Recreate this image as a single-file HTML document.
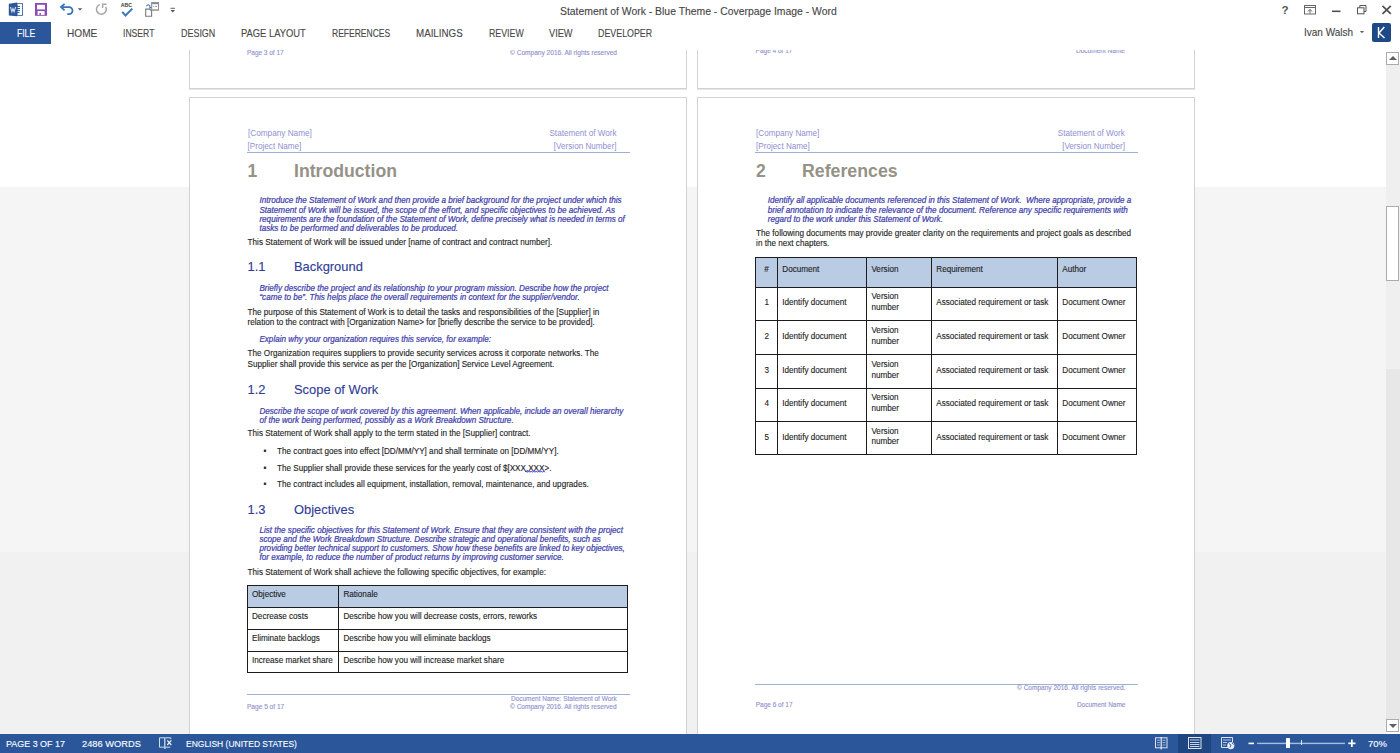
<!DOCTYPE html>
<html><head><meta charset="utf-8">
<style>
*{margin:0;padding:0;box-sizing:border-box}
html,body{width:1400px;height:753px;overflow:hidden;background:#fff;position:relative;font-family:"Liberation Sans",sans-serif}
.t{position:absolute;white-space:pre;line-height:0;transform-origin:0 50%;font-family:"Liberation Sans",sans-serif;-webkit-text-stroke:0.12px currentColor}
.a{position:absolute}
.pg{position:absolute;background:#fff;border:1px solid #d2d2d2}
.hl{position:absolute;height:1px;background:#9db2d2}
.tb{position:absolute;border:1px solid #1c1c1c}
.vl{position:absolute;width:1px;background:#1c1c1c}
.hr{position:absolute;height:1px;background:#1c1c1c}
</style></head><body>
<!-- background bands -->
<div class="a" style="left:0;top:187px;width:1386px;height:365px;background:#f5f5f5"></div>
<div class="a" style="left:0;top:552px;width:1386px;height:182px;background:#f1f1f1"></div>
<!-- scrollbar -->
<div class="a" style="left:1386px;top:64px;width:14px;height:305px;background:#efefef"></div>
<div class="a" style="left:1386px;top:369px;width:14px;height:351px;background:#e7e7e7"></div>
<div class="a" style="left:1386px;top:52px;width:13px;height:13px;background:#fff;border:1px solid #ababab"></div>
<div class="a" style="left:1389px;top:56px;width:0;height:0;border-left:4px solid transparent;border-right:4px solid transparent;border-bottom:4px solid #606060"></div>
<div class="a" style="left:1386px;top:206px;width:13px;height:75px;background:#fff;border:1px solid #ababab"></div>
<div class="a" style="left:1386px;top:719px;width:13px;height:13px;background:#fff;border:1px solid #ababab"></div>
<div class="a" style="left:1389px;top:724px;width:0;height:0;border-left:4px solid transparent;border-right:4px solid transparent;border-top:4px solid #606060"></div>

<!-- top partial pages -->
<div class="pg" style="left:189px;top:40px;width:498px;height:49px;border-top:none;box-shadow:0 1px 0 #e6e6e6"></div>
<div class="pg" style="left:697px;top:40px;width:498px;height:49px;border-top:none;box-shadow:0 1px 0 #e6e6e6"></div>
<!-- main pages -->
<div class="pg" style="left:189px;top:97px;width:498px;height:700px"></div>
<div class="pg" style="left:697px;top:97px;width:498px;height:700px"></div>

<!-- header/footer lines -->
<div class="hl" style="left:247px;top:152px;width:383px"></div>
<div class="hl" style="left:755px;top:152px;width:383px"></div>
<div class="hl" style="left:247px;top:694px;width:383px"></div>
<div class="hl" style="left:755px;top:684px;width:383px"></div>

<!-- table 1 -->
<div class="a" style="left:247px;top:585px;width:381px;height:23px;background:#b9cce4"></div>
<div class="tb" style="left:247px;top:585px;width:381px;height:88px"></div>
<div class="hr" style="left:247px;top:607px;width:381px"></div>
<div class="hr" style="left:247px;top:629px;width:381px"></div>
<div class="hr" style="left:247px;top:651px;width:381px"></div>
<div class="vl" style="left:338px;top:585px;height:88px"></div>

<!-- table 2 -->
<div class="a" style="left:755px;top:257px;width:382px;height:31px;background:#b9cce4"></div>
<div class="tb" style="left:755px;top:257px;width:382px;height:198px"></div>
<div class="hr" style="left:755px;top:287px;width:382px"></div>
<div class="hr" style="left:755px;top:320px;width:382px"></div>
<div class="hr" style="left:755px;top:354px;width:382px"></div>
<div class="hr" style="left:755px;top:388px;width:382px"></div>
<div class="hr" style="left:755px;top:421px;width:382px"></div>
<div class="vl" style="left:777px;top:257px;height:198px"></div>
<div class="vl" style="left:866px;top:257px;height:198px"></div>
<div class="vl" style="left:931px;top:257px;height:198px"></div>
<div class="vl" style="left:1057px;top:257px;height:198px"></div>

<!-- ribbon: title bar + tabs -->
<div class="a" style="left:0;top:0;width:1400px;height:50px;background:#fff;z-index:5"></div>
<div class="a" style="left:0;top:22px;width:51px;height:22px;background:#2b579a;z-index:5"></div>
<div class="a" style="left:1372px;top:23px;width:19px;height:19px;background:#1d4a86;border-radius:2px;z-index:5"></div>

<!-- status bar -->
<div class="a" style="left:0;top:734px;width:1400px;height:19px;background:#2b579a"></div>
<div class="a" style="left:1178px;top:734px;width:33px;height:19px;background:#1f4680"></div>

<svg class="a" style="left:0;top:0;z-index:7" width="1400" height="753" viewBox="0 0 1400 753">
<!-- Word logo -->
<rect x="17.2" y="3.6" width="5.3" height="11.8" fill="#fff" stroke="#3d68a8" stroke-width="0.9"/>
<path d="M17 6.4 H20 M17 8.5 H20 M17 10.4 H20 M17 12.4 H19.5" stroke="#2b579a" stroke-width="1"/>
<path d="M8.8 3.7 L17 2.5 L17 16.3 L8.8 15.4 Z" fill="#2b579a"/>
<path d="M10.5 7 L11.9 11.8 L13 8.6 L14.1 11.8 L15.6 7" fill="none" stroke="#d5def0" stroke-width="1.1"/>
<!-- Save -->
<rect x="35" y="3" width="12" height="12.8" fill="#8a4db3"/>
<rect x="37" y="4.8" width="8" height="4.6" fill="#fff"/>
<rect x="37.6" y="11" width="7" height="3.9" fill="#fff"/>
<rect x="39.4" y="12.9" width="1.5" height="2" fill="#8a4db3"/>
<!-- Undo -->
<path d="M61.5 7.1 H69 A3.5 3.5 0 0 1 69 14.1 H67.3" fill="none" stroke="#3372bf" stroke-width="1.8"/>
<path d="M64.6 3.8 L61 7.1 L64.6 10.4" fill="none" stroke="#3372bf" stroke-width="1.8"/>
<path d="M77.8 8.2 H82.3 L80 10.5 Z" fill="#555"/>
<!-- Redo (gray circle arrow) -->
<path d="M99.8 4.6 A4.9 4.9 0 1 0 105.6 6.8" fill="none" stroke="#a6a6a6" stroke-width="1.5"/>
<path d="M102.6 8.1 V4.3 H106.6" fill="none" stroke="#a6a6a6" stroke-width="1.5"/>
<!-- ABC check -->
<text x="120.8" y="7" font-family="Liberation Sans" font-size="5" font-weight="700" fill="#3a3a3a" textLength="11.2" lengthAdjust="spacingAndGlyphs">ABC</text>
<path d="M122.2 11.8 L125.5 15.5 L132.3 8.6" fill="none" stroke="#3d76bd" stroke-width="2"/>
<!-- doc/screen icon -->
<rect x="151.7" y="2.8" width="6.8" height="7.2" fill="#fff" stroke="#8a8a8a" stroke-width="1"/>
<rect x="151.2" y="2.3" width="7.8" height="1.9" fill="#8a8a8a"/>
<path d="M153.3 6.4 H154.2 M155.1 6.4 H157.1" stroke="#8a8a8a" stroke-width="0.9"/>
<rect x="151.6" y="9.6" width="7.3" height="1.1" fill="#9c9c9c"/>
<path d="M145.7 9.1 H149.7 L151.6 11 V16.2 H145.7 Z" fill="#fff" stroke="#7a7a7a" stroke-width="1.1"/>
<path d="M146.4 6.3 Q148.3 3.2 150.2 6.3" fill="none" stroke="#3a78c3" stroke-width="1.2"/>
<path d="M148.9 6.2 L151.9 7.2 L149.8 8.9 Z" fill="#3a78c3"/>
<!-- customize -->
<path d="M170.5 8.3 H175" stroke="#555" stroke-width="0.9"/>
<path d="M170.5 10 H175 L172.75 12.6 Z" fill="#555"/>

<!-- title right icons -->
<text x="1281.5" y="14" font-family="Liberation Sans" font-size="11.5" font-weight="700" fill="#555">?</text>
<rect x="1304.5" y="5.5" width="11" height="8.5" fill="none" stroke="#666" stroke-width="1"/>
<path d="M1304.5 7.5 H1315.5" stroke="#666" stroke-width="1"/>
<path d="M1310 13.5 V9.5 M1308 11.5 L1310 9.3 L1312 11.5" fill="none" stroke="#666" stroke-width="1"/>
<path d="M1332 11.3 H1340.5" stroke="#505050" stroke-width="1.6"/>
<rect x="1357.5" y="7.8" width="6.5" height="6" fill="none" stroke="#555" stroke-width="1"/>
<path d="M1359.8 7.8 V5.5 H1366 V11.5 H1364" fill="none" stroke="#555" stroke-width="1"/>
<path d="M1382.5 5.8 L1390.8 13.8 M1390.8 5.8 L1382.5 13.8" stroke="#505050" stroke-width="1.7"/>
<!-- account -->
<path d="M1359.8 31 H1364.2 L1362 33.3 Z" fill="#666"/>
<path d="M1378.5 27 V38 M1384.3 27 L1379 33 L1384.5 38" fill="none" stroke="#fff" stroke-width="1.4"/>

<!-- status bar icons -->
<!-- proofing -->
<path d="M159.5 737.8 H164.6 V747.2 H159.5 Z" fill="none" stroke="#d3dcec" stroke-width="1"/>
<path d="M165.2 737.8 H170.8 V739.2 M165.2 747.2 H170.2" fill="none" stroke="#d3dcec" stroke-width="1"/>
<path d="M164.9 737.3 V748" stroke="#b9c7df" stroke-width="1"/>
<rect x="164.2" y="747.6" width="1.5" height="1.2" fill="#e8eef7"/>
<path d="M167.3 740.4 L171.3 745 M171.3 740.4 L167.3 745" stroke="#f2f5fa" stroke-width="1.2"/>
<!-- read mode -->
<rect x="1155.5" y="737.8" width="11.5" height="10" fill="none" stroke="#dbe3f0" stroke-width="1"/>
<path d="M1161.2 737 V749.5" stroke="#e6ecf5" stroke-width="1.2"/>
<path d="M1157 740.3 H1160 M1157 742.6 H1160 M1157 745 H1160 M1162.5 740.3 H1165.5 M1162.5 742.6 H1165.5 M1162.5 745 H1165.5" stroke="#aebfdb" stroke-width="0.9"/>
<!-- print layout -->
<rect x="1188.5" y="737.5" width="12.5" height="11" fill="none" stroke="#dbe3f0" stroke-width="1"/>
<path d="M1190 740 H1199.5 M1190 742.5 H1199.5 M1190 744.5 H1199.5 M1190 746.5 H1199.5" stroke="#dbe3f0" stroke-width="0.9"/>
<!-- web layout -->
<path d="M1228 747.5 H1221.5 V737.5 H1232.5 V742" fill="none" stroke="#dbe3f0" stroke-width="1"/>
<path d="M1223 740 H1231 M1223 742.5 H1227 M1223 745 H1226" stroke="#c5d2e6" stroke-width="0.9"/>
<circle cx="1230.8" cy="745.6" r="3.6" fill="#e6ecf5"/>
<path d="M1229 743.5 L1231 745 L1230 747.5 M1232 743 L1233.5 744.5" fill="none" stroke="#2b579a" stroke-width="0.9"/>
<!-- zoom slider -->
<rect x="1248.5" y="742.6" width="5.5" height="1.6" fill="#fff"/>
<rect x="1257" y="742.7" width="88" height="1.4" fill="#a9bcd9"/>
<rect x="1286" y="738" width="4" height="10" fill="#fff"/>
<rect x="1301" y="740" width="1" height="5" fill="#dbe3f0"/>
<rect x="1348.3" y="742.5" width="7.2" height="1.7" fill="#fff"/>
<rect x="1351" y="739.5" width="1.7" height="7.5" fill="#fff"/>
<path d="M525 471.8 L526.25 471.0 L527.50 472.3 L528.75 471.0 L530.00 472.3 L531.25 471.0 L532.50 472.3 L533.75 471.0 L535.00 472.3 L536.25 471.0 L537.50 472.3 L538.75 471.0 L540.00 472.3 L541.25 471.0 L542.50 472.3 L543.75 471.0 L545.00 472.3" fill="none" stroke="#2626f5" stroke-width="0.9"/>
</svg>

<span class="t" style="left:560.30px;top:11.28px;font-size:11.3px;color:#444;transform:scaleX(0.9201);z-index:6;">Statement of Work - Blue Theme - Coverpage Image - Word</span>
<span class="t" style="left:16.90px;top:32.78px;font-size:11.3px;color:#fff;transform:scaleX(0.7585);z-index:6;">FILE</span>
<span class="t" style="left:66.70px;top:32.78px;font-size:11.3px;color:#474747;transform:scaleX(0.8938);z-index:6;">HOME</span>
<span class="t" style="left:122.60px;top:32.78px;font-size:11.3px;color:#474747;transform:scaleX(0.7615);z-index:6;">INSERT</span>
<span class="t" style="left:180.70px;top:32.78px;font-size:11.3px;color:#474747;transform:scaleX(0.7917);z-index:6;">DESIGN</span>
<span class="t" style="left:240.70px;top:32.78px;font-size:11.3px;color:#474747;transform:scaleX(0.8287);z-index:6;">PAGE LAYOUT</span>
<span class="t" style="left:331.80px;top:32.78px;font-size:11.3px;color:#474747;transform:scaleX(0.7536);z-index:6;">REFERENCES</span>
<span class="t" style="left:415.80px;top:32.78px;font-size:11.3px;color:#474747;transform:scaleX(0.8648);z-index:6;">MAILINGS</span>
<span class="t" style="left:488.50px;top:32.78px;font-size:11.3px;color:#474747;transform:scaleX(0.7784);z-index:6;">REVIEW</span>
<span class="t" style="left:549.00px;top:32.78px;font-size:11.3px;color:#474747;transform:scaleX(0.8137);z-index:6;">VIEW</span>
<span class="t" style="left:597.60px;top:32.78px;font-size:11.3px;color:#474747;transform:scaleX(0.7846);z-index:6;">DEVELOPER</span>
<span class="t" style="left:1304.00px;top:32.08px;font-size:11.3px;color:#444;transform:scaleX(0.8833);z-index:6;">Ivan Walsh</span>
<span class="t" style="left:6.00px;top:743.67px;font-size:9.6px;color:#fff;transform:scaleX(0.9318);">PAGE 3 OF 17</span>
<span class="t" style="left:82.00px;top:743.67px;font-size:9.6px;color:#fff;transform:scaleX(0.9701);">2486 WORDS</span>
<span class="t" style="left:186.00px;top:743.67px;font-size:9.6px;color:#fff;transform:scaleX(0.8843);">ENGLISH (UNITED STATES)</span>
<span class="t" style="left:1368.00px;top:743.67px;font-size:9.6px;color:#fff;transform:scaleX(0.9888);">70%</span>
<span class="t" style="left:247.40px;top:53.05px;font-size:6.5px;color:#8f8fcc;transform:scaleX(0.9928);-webkit-text-stroke:0.12px currentColor;">Page 3 of 17</span>
<span class="t" style="left:510.00px;top:53.05px;font-size:6.5px;color:#8f8fcc;transform:scaleX(1.0099);-webkit-text-stroke:0.12px currentColor;">© Company 2016. All rights reserved</span>
<span class="t" style="left:755.60px;top:51.45px;font-size:6.5px;color:#8f8fcc;-webkit-text-stroke:0.12px currentColor;">Page 4 of 17</span>
<span class="t" style="left:1076.00px;top:51.45px;font-size:6.5px;color:#8f8fcc;transform:scaleX(1.0047);-webkit-text-stroke:0.12px currentColor;">Document Name</span>
<span class="t" style="left:247.60px;top:134.48px;font-size:8.15px;color:#8f8fcf;transform:scaleX(1.0093);-webkit-text-stroke:0;">[Company Name]</span>
<span class="t" style="left:247.60px;top:146.58px;font-size:8.15px;color:#8f8fcf;-webkit-text-stroke:0;">[Project Name]</span>
<span class="t" style="left:549.46px;top:134.48px;font-size:8.15px;color:#8f8fcf;-webkit-text-stroke:0;">Statement of Work</span>
<span class="t" style="left:553.84px;top:146.58px;font-size:8.15px;color:#8f8fcf;-webkit-text-stroke:0;">[Version Number]</span>
<span class="t" style="left:247.60px;top:171.20px;font-size:17.6px;color:#959286;font-weight:700;-webkit-text-stroke:0;">1</span>
<span class="t" style="left:294.00px;top:171.20px;font-size:17.6px;color:#959286;font-weight:700;transform:scaleX(1.0035);-webkit-text-stroke:0;">Introduction</span>
<span class="t" style="left:259.40px;top:201.28px;font-size:8.15px;color:#4040aa;font-style:italic;-webkit-text-stroke:0.22px currentColor;">Introduce the Statement of Work and then provide a brief background for the project under which this</span>
<span class="t" style="left:259.40px;top:210.68px;font-size:8.15px;color:#4040aa;font-style:italic;-webkit-text-stroke:0.22px currentColor;">Statement of Work will be issued, the scope of the effort, and specific objectives to be achieved. As</span>
<span class="t" style="left:259.40px;top:219.98px;font-size:8.15px;color:#4040aa;font-style:italic;-webkit-text-stroke:0.22px currentColor;">requirements are the foundation of the Statement of Work, define precisely what is needed in terms of</span>
<span class="t" style="left:259.40px;top:229.28px;font-size:8.15px;color:#4040aa;font-style:italic;-webkit-text-stroke:0.22px currentColor;">tasks to be performed and deliverables to be produced.</span>
<span class="t" style="left:247.60px;top:242.78px;font-size:8.15px;color:#1e1e1e;">This Statement of Work will be issued under [name of contract and contract number].</span>
<span class="t" style="left:247.60px;top:267.03px;font-size:12.9px;color:#2f3b96;">1.1</span>
<span class="t" style="left:294.00px;top:267.03px;font-size:12.9px;color:#2f3b96;">Background</span>
<span class="t" style="left:259.40px;top:288.98px;font-size:8.15px;color:#4040aa;font-style:italic;-webkit-text-stroke:0.22px currentColor;">Briefly describe the project and its relationship to your program mission. Describe how the project</span>
<span class="t" style="left:259.40px;top:298.38px;font-size:8.15px;color:#4040aa;font-style:italic;-webkit-text-stroke:0.22px currentColor;">“came to be”. This helps place the overall requirements in context for the supplier/vendor.</span>
<span class="t" style="left:247.60px;top:312.78px;font-size:8.15px;color:#1e1e1e;">The purpose of this Statement of Work is to detail the tasks and responsibilities of the [Supplier] in</span>
<span class="t" style="left:247.60px;top:322.78px;font-size:8.15px;color:#1e1e1e;">relation to the contract with [Organization Name&gt; for [briefly describe the service to be provided].</span>
<span class="t" style="left:259.40px;top:340.38px;font-size:8.15px;color:#4040aa;font-style:italic;-webkit-text-stroke:0.22px currentColor;">Explain why your organization requires this service, for example:</span>
<span class="t" style="left:247.60px;top:354.18px;font-size:8.15px;color:#1e1e1e;">The Organization requires suppliers to provide security services across it corporate networks. The</span>
<span class="t" style="left:247.60px;top:365.08px;font-size:8.15px;color:#1e1e1e;">Supplier shall provide this service as per the [Organization] Service Level Agreement.</span>
<span class="t" style="left:247.60px;top:390.03px;font-size:12.9px;color:#2f3b96;">1.2</span>
<span class="t" style="left:294.00px;top:390.03px;font-size:12.9px;color:#2f3b96;">Scope of Work</span>
<span class="t" style="left:259.40px;top:411.98px;font-size:8.15px;color:#4040aa;font-style:italic;-webkit-text-stroke:0.22px currentColor;">Describe the scope of work covered by this agreement. When applicable, include an overall hierarchy</span>
<span class="t" style="left:259.40px;top:421.08px;font-size:8.15px;color:#4040aa;font-style:italic;-webkit-text-stroke:0.22px currentColor;">of the work being performed, possibly as a Work Breakdown Structure.</span>
<span class="t" style="left:247.60px;top:434.38px;font-size:8.15px;color:#1e1e1e;">This Statement of Work shall apply to the term stated in the [Supplier] contract.</span>
<span class="t" style="left:263.50px;top:451.78px;font-size:8.15px;color:#1e1e1e;">•</span>
<span class="t" style="left:277.10px;top:451.78px;font-size:8.15px;color:#1e1e1e;">The contract goes into effect [DD/MM/YY] and shall terminate on [DD/MM/YY].</span>
<span class="t" style="left:263.50px;top:468.98px;font-size:8.15px;color:#1e1e1e;">•</span>
<span class="t" style="left:277.10px;top:468.98px;font-size:8.15px;color:#1e1e1e;">The Supplier shall provide these services for the yearly cost of $[XXX,XXX&gt;.</span>
<span class="t" style="left:263.50px;top:484.98px;font-size:8.15px;color:#1e1e1e;">•</span>
<span class="t" style="left:277.10px;top:484.98px;font-size:8.15px;color:#1e1e1e;">The contract includes all equipment, installation, removal, maintenance, and upgrades.</span>
<span class="t" style="left:247.60px;top:510.03px;font-size:12.9px;color:#2f3b96;">1.3</span>
<span class="t" style="left:294.00px;top:510.03px;font-size:12.9px;color:#2f3b96;">Objectives</span>
<span class="t" style="left:259.40px;top:531.38px;font-size:8.15px;color:#4040aa;font-style:italic;-webkit-text-stroke:0.22px currentColor;">List the specific objectives for this Statement of Work. Ensure that they are consistent with the project</span>
<span class="t" style="left:259.40px;top:540.48px;font-size:8.15px;color:#4040aa;font-style:italic;-webkit-text-stroke:0.22px currentColor;">scope and the Work Breakdown Structure. Describe strategic and operational benefits, such as</span>
<span class="t" style="left:259.40px;top:549.38px;font-size:8.15px;color:#4040aa;font-style:italic;-webkit-text-stroke:0.22px currentColor;">providing better technical support to customers. Show how these benefits are linked to key objectives,</span>
<span class="t" style="left:259.40px;top:558.48px;font-size:8.15px;color:#4040aa;font-style:italic;-webkit-text-stroke:0.22px currentColor;">for example, to reduce the number of product returns by improving customer service.</span>
<span class="t" style="left:247.60px;top:572.88px;font-size:8.15px;color:#1e1e1e;">This Statement of Work shall achieve the following specific objectives, for example:</span>
<span class="t" style="left:252.00px;top:595.08px;font-size:8.15px;color:#1e1e1e;">Objective</span>
<span class="t" style="left:343.40px;top:595.08px;font-size:8.15px;color:#1e1e1e;">Rationale</span>
<span class="t" style="left:252.00px;top:617.08px;font-size:8.15px;color:#1e1e1e;">Decrease costs</span>
<span class="t" style="left:343.40px;top:617.08px;font-size:8.15px;color:#1e1e1e;">Describe how you will decrease costs, errors, reworks</span>
<span class="t" style="left:252.00px;top:639.08px;font-size:8.15px;color:#1e1e1e;">Eliminate backlogs</span>
<span class="t" style="left:343.40px;top:639.08px;font-size:8.15px;color:#1e1e1e;">Describe how you will eliminate backlogs</span>
<span class="t" style="left:252.00px;top:660.78px;font-size:8.15px;color:#1e1e1e;">Increase market share</span>
<span class="t" style="left:343.40px;top:660.78px;font-size:8.15px;color:#1e1e1e;">Describe how you will increase market share</span>
<span class="t" style="left:510.90px;top:698.55px;font-size:6.5px;color:#8f8fcc;transform:scaleX(0.9963);-webkit-text-stroke:0.12px currentColor;">Document Name: Statement of Work</span>
<span class="t" style="left:510.00px;top:707.05px;font-size:6.5px;color:#8f8fcc;transform:scaleX(1.0061);-webkit-text-stroke:0.12px currentColor;">© Company 2016. All rights reserved</span>
<span class="t" style="left:247.40px;top:707.05px;font-size:6.5px;color:#8f8fcc;transform:scaleX(1.0091);-webkit-text-stroke:0.12px currentColor;">Page 5 of 17</span>
<span class="t" style="left:756.10px;top:134.48px;font-size:8.15px;color:#8f8fcf;-webkit-text-stroke:0;">[Company Name]</span>
<span class="t" style="left:756.10px;top:146.58px;font-size:8.15px;color:#8f8fcf;-webkit-text-stroke:0;">[Project Name]</span>
<span class="t" style="left:1057.76px;top:134.48px;font-size:8.15px;color:#8f8fcf;-webkit-text-stroke:0;">Statement of Work</span>
<span class="t" style="left:1062.14px;top:146.58px;font-size:8.15px;color:#8f8fcf;-webkit-text-stroke:0;">[Version Number]</span>
<span class="t" style="left:756.00px;top:171.20px;font-size:17.6px;color:#959286;font-weight:700;-webkit-text-stroke:0;">2</span>
<span class="t" style="left:802.30px;top:171.20px;font-size:17.6px;color:#959286;font-weight:700;transform:scaleX(1.0084);-webkit-text-stroke:0;">References</span>
<span class="t" style="left:767.70px;top:201.28px;font-size:8.15px;color:#4040aa;font-style:italic;-webkit-text-stroke:0.22px currentColor;">Identify all applicable documents referenced in this Statement of Work.  Where appropriate, provide a</span>
<span class="t" style="left:767.70px;top:210.68px;font-size:8.15px;color:#4040aa;font-style:italic;-webkit-text-stroke:0.22px currentColor;">brief annotation to indicate the relevance of the document. Reference any specific requirements with</span>
<span class="t" style="left:767.70px;top:219.98px;font-size:8.15px;color:#4040aa;font-style:italic;-webkit-text-stroke:0.22px currentColor;">regard to the work under this Statement of Work.</span>
<span class="t" style="left:756.10px;top:233.58px;font-size:8.15px;color:#1e1e1e;">The following documents may provide greater clarity on the requirements and project goals as described</span>
<span class="t" style="left:756.10px;top:244.18px;font-size:8.15px;color:#1e1e1e;">in the next chapters.</span>
<span class="t" style="left:764.20px;top:270.48px;font-size:8.15px;color:#1e1e1e;">#</span>
<span class="t" style="left:782.30px;top:270.48px;font-size:8.15px;color:#1e1e1e;">Document</span>
<span class="t" style="left:871.40px;top:270.48px;font-size:8.15px;color:#1e1e1e;">Version</span>
<span class="t" style="left:936.30px;top:270.48px;font-size:8.15px;color:#1e1e1e;">Requirement</span>
<span class="t" style="left:1062.30px;top:270.48px;font-size:8.15px;color:#1e1e1e;">Author</span>
<span class="t" style="left:764.50px;top:303.28px;font-size:8.15px;color:#1e1e1e;">1</span>
<span class="t" style="left:782.30px;top:303.28px;font-size:8.15px;color:#1e1e1e;">Identify document</span>
<span class="t" style="left:871.40px;top:297.08px;font-size:8.15px;color:#1e1e1e;">Version</span>
<span class="t" style="left:871.40px;top:307.88px;font-size:8.15px;color:#1e1e1e;">number</span>
<span class="t" style="left:936.30px;top:303.28px;font-size:8.15px;color:#1e1e1e;">Associated requirement or task</span>
<span class="t" style="left:1062.30px;top:303.28px;font-size:8.15px;color:#1e1e1e;">Document Owner</span>
<span class="t" style="left:764.50px;top:337.03px;font-size:8.15px;color:#1e1e1e;">2</span>
<span class="t" style="left:782.30px;top:337.03px;font-size:8.15px;color:#1e1e1e;">Identify document</span>
<span class="t" style="left:871.40px;top:330.83px;font-size:8.15px;color:#1e1e1e;">Version</span>
<span class="t" style="left:871.40px;top:341.63px;font-size:8.15px;color:#1e1e1e;">number</span>
<span class="t" style="left:936.30px;top:337.03px;font-size:8.15px;color:#1e1e1e;">Associated requirement or task</span>
<span class="t" style="left:1062.30px;top:337.03px;font-size:8.15px;color:#1e1e1e;">Document Owner</span>
<span class="t" style="left:764.50px;top:371.03px;font-size:8.15px;color:#1e1e1e;">3</span>
<span class="t" style="left:782.30px;top:371.03px;font-size:8.15px;color:#1e1e1e;">Identify document</span>
<span class="t" style="left:871.40px;top:364.83px;font-size:8.15px;color:#1e1e1e;">Version</span>
<span class="t" style="left:871.40px;top:375.63px;font-size:8.15px;color:#1e1e1e;">number</span>
<span class="t" style="left:936.30px;top:371.03px;font-size:8.15px;color:#1e1e1e;">Associated requirement or task</span>
<span class="t" style="left:1062.30px;top:371.03px;font-size:8.15px;color:#1e1e1e;">Document Owner</span>
<span class="t" style="left:764.50px;top:404.43px;font-size:8.15px;color:#1e1e1e;">4</span>
<span class="t" style="left:782.30px;top:404.43px;font-size:8.15px;color:#1e1e1e;">Identify document</span>
<span class="t" style="left:871.40px;top:398.23px;font-size:8.15px;color:#1e1e1e;">Version</span>
<span class="t" style="left:871.40px;top:409.03px;font-size:8.15px;color:#1e1e1e;">number</span>
<span class="t" style="left:936.30px;top:404.43px;font-size:8.15px;color:#1e1e1e;">Associated requirement or task</span>
<span class="t" style="left:1062.30px;top:404.43px;font-size:8.15px;color:#1e1e1e;">Document Owner</span>
<span class="t" style="left:764.50px;top:437.73px;font-size:8.15px;color:#1e1e1e;">5</span>
<span class="t" style="left:782.30px;top:437.73px;font-size:8.15px;color:#1e1e1e;">Identify document</span>
<span class="t" style="left:871.40px;top:431.53px;font-size:8.15px;color:#1e1e1e;">Version</span>
<span class="t" style="left:871.40px;top:442.33px;font-size:8.15px;color:#1e1e1e;">number</span>
<span class="t" style="left:936.30px;top:437.73px;font-size:8.15px;color:#1e1e1e;">Associated requirement or task</span>
<span class="t" style="left:1062.30px;top:437.73px;font-size:8.15px;color:#1e1e1e;">Document Owner</span>
<span class="t" style="left:1016.60px;top:688.05px;font-size:6.5px;color:#8f8fcc;transform:scaleX(1.0060);-webkit-text-stroke:0.12px currentColor;">© Company 2016. All rights reserved.</span>
<span class="t" style="left:755.70px;top:704.55px;font-size:6.5px;color:#8f8fcc;-webkit-text-stroke:0.12px currentColor;">Page 6 of 17</span>
<span class="t" style="left:1076.60px;top:704.55px;font-size:6.5px;color:#8f8fcc;transform:scaleX(0.9924);-webkit-text-stroke:0.12px currentColor;">Document Name</span>
</body></html>
